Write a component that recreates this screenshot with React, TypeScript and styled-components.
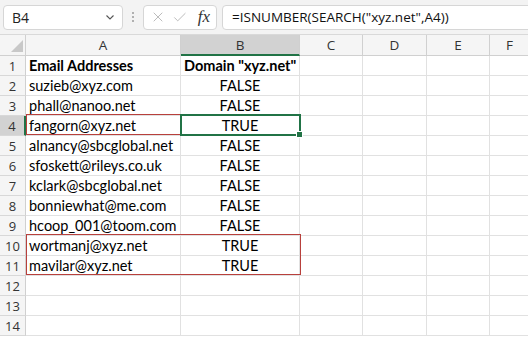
import React from "react";
import styled, { createGlobalStyle } from "styled-components";

const GlobalStyle = createGlobalStyle`
  html, body {
    margin: 0;
    padding: 0;
    background: #ffffff;
  }
  body {
    font-family: "Lato", "Liberation Sans", sans-serif;
  }
`;

const COLS = [26, 155, 119, 63, 64, 63, 40];
const HEADER_H = 21;
const ROW_H = 20;

const rows = [
  { email: "Email Addresses", result: 'Domain "xyz.net"', bold: true },
  { email: "suzieb@xyz.com", result: "FALSE" },
  { email: "phall@nanoo.net", result: "FALSE" },
  { email: "fangorn@xyz.net", result: "TRUE" },
  { email: "alnancy@sbcglobal.net", result: "FALSE" },
  { email: "sfoskett@rileys.co.uk", result: "FALSE" },
  { email: "kclark@sbcglobal.net", result: "FALSE" },
  { email: "bonniewhat@me.com", result: "FALSE" },
  { email: "hcoop_001@toom.com", result: "FALSE" },
  { email: "wortmanj@xyz.net", result: "TRUE" },
  { email: "mavilar@xyz.net", result: "TRUE" },
  { email: "", result: "" },
  { email: "", result: "" },
  { email: "", result: "" },
];

function App() {
  const left = (col: number) => COLS.slice(0, col).reduce((a, b) => a + b, 0);
  const top = (row: number) => HEADER_H + (row - 1) * ROW_H;

  return (
    <>
      <GlobalStyle />
      <Page>
        <Toolbar>
          <NameBox>
            <span>B4</span>
            <svg width="12" height="12" viewBox="0 0 12 12">
              <path d="M2.5 4.5 L6 8 L9.5 4.5" fill="none" stroke="#555" strokeWidth="1.1" />
            </svg>
          </NameBox>
          <Dots>
            <i />
            <i />
            <i />
          </Dots>
          <FxBox>
            <svg width="14" height="14" viewBox="0 0 14 14">
              <path d="M2 2 L12 12 M12 2 L2 12" stroke="#b8b8b8" strokeWidth="1.1" fill="none" />
            </svg>
            <svg width="16" height="14" viewBox="0 0 16 14">
              <path d="M1.5 7.5 L5.5 11.5 L14.5 2.5" stroke="#b8b8b8" strokeWidth="1.1" fill="none" />
            </svg>
            <Fx>fx</Fx>
          </FxBox>
          <FormulaBox>=ISNUMBER(SEARCH("xyz.net",A4))</FormulaBox>
        </Toolbar>

        <Sheet>
          <Grid>
            <Corner>
              <svg width="12" height="12" viewBox="0 0 12 12">
                <path d="M12 0 L12 12 L0 12 Z" fill="#c8c8c8" />
              </svg>
            </Corner>
            {["A", "B", "C", "D", "E", "F"].map((c) => (
              <ColHead key={c} $active={c === "B"}>
                {c}
              </ColHead>
            ))}
            {rows.map((r, i) => {
              const n = i + 1;
              return (
                <React.Fragment key={n}>
                  <RowHead $active={n === 4}>{n}</RowHead>
                  <Cell $bold={r.bold}>{r.email}</Cell>
                  <Cell $bold={r.bold} $center={!r.bold}>
                    {r.result}
                  </Cell>
                  <Cell />
                  <Cell />
                  <Cell />
                  <Cell />
                </React.Fragment>
              );
            })}
          </Grid>

          <RedBox
            style={{
              left: left(1),
              top: top(4) - 1,
              width: COLS[1] + 1,
              height: ROW_H + 1,
            }}
          />
          <RedBox
            style={{
              left: left(1),
              top: top(10) - 1,
              width: COLS[1] + COLS[2] + 1,
              height: ROW_H * 2 + 1,
            }}
          />
          <ActiveCell
            style={{
              left: left(2) - 1,
              top: top(4) - 1,
              width: COLS[2] + 2,
              height: ROW_H + 2,
            }}
          >
            <FillHandle />
          </ActiveCell>
        </Sheet>
      </Page>
    </>
  );
}

const Page = styled.div`
  width: 528px;
  height: 340px;
  overflow: hidden;
  background: #ffffff;
`;

const Toolbar = styled.div`
  display: flex;
  align-items: center;
  height: 34px;
  padding: 0 0 0 3px;
  background: #f3f3f3;
  box-sizing: border-box;
`;

const Box = styled.div`
  height: 25px;
  box-sizing: border-box;
  background: #ffffff;
  border: 1px solid #d6d6d6;
  border-radius: 4px;
  display: flex;
  align-items: center;
`;

const NameBox = styled(Box)`
  width: 120px;
  padding: 0 6px 0 8px;
  justify-content: space-between;
  font-family: "Open Sans", "Liberation Sans", sans-serif;
  font-size: 14px;
  color: #222;
`;

const Dots = styled.div`
  width: 20px;
  display: flex;
  flex-direction: column;
  align-items: center;
  gap: 2px;
  i {
    display: block;
    width: 2px;
    height: 2px;
    border-radius: 1px;
    background: #9a9a9a;
  }
`;

const FxBox = styled(Box)`
  width: 74px;
  padding: 0 6px 0 8px;
  gap: 9px;
`;

const Fx = styled.span`
  font-family: "Liberation Serif", "DejaVu Serif", serif;
  font-style: italic;
  font-size: 17px;
  color: #333;
  margin-left: 2px;
`;

const FormulaBox = styled(Box)`
  flex: 1;
  margin-left: 5px;
  margin-right: -6px;
  padding-left: 9px;
  font-family: "Open Sans", "Liberation Sans", sans-serif;
  font-size: 13.5px;
  color: #111;
  white-space: nowrap;
`;

const Sheet = styled.div`
  position: relative;
`;

const Grid = styled.div`
  display: grid;
  grid-template-columns: ${COLS.map((c) => `${c}px`).join(" ")};
  grid-template-rows: ${HEADER_H}px;
  grid-auto-rows: ${ROW_H}px;
  border-top: 1px solid #d9d9d9;
`;

const Corner = styled.div`
  background: #f5f5f5;
  border-right: 1px solid #d0d0d0;
  border-bottom: 1px solid #d0d0d0;
  display: flex;
  align-items: flex-end;
  justify-content: flex-end;
  padding: 0 2px 3px 0;
  box-sizing: border-box;
`;

const ColHead = styled.div<{ $active?: boolean }>`
  background: ${(p) => (p.$active ? "#d2d2d2" : "#f5f5f5")};
  border-right: 1px solid #d0d0d0;
  border-bottom: ${(p) => (p.$active ? "2px solid #217346" : "1px solid #d0d0d0")};
  box-sizing: border-box;
  display: flex;
  align-items: center;
  justify-content: center;
  font-family: "Open Sans", "Liberation Sans", sans-serif;
  font-size: 13.5px;
  color: #333;
`;

const RowHead = styled.div<{ $active?: boolean }>`
  background: ${(p) => (p.$active ? "#d2d2d2" : "#f5f5f5")};
  border-right: ${(p) => (p.$active ? "2px solid #217346" : "1px solid #d0d0d0")};
  border-bottom: 1px solid #d8d8d8;
  box-sizing: border-box;
  display: flex;
  align-items: center;
  justify-content: center;
  font-family: "Open Sans", "Liberation Sans", sans-serif;
  font-size: 13px;
  color: #333;
`;

const Cell = styled.div<{ $bold?: boolean; $center?: boolean }>`
  border-right: 1px solid #e1e1e1;
  border-bottom: 1px solid #e1e1e1;
  box-sizing: border-box;
  display: flex;
  align-items: center;
  justify-content: ${(p) => (p.$center ? "center" : "flex-start")};
  padding: 0 3px;
  font-family: "Lato", "Liberation Sans", sans-serif;
  font-size: 14.5px;
  font-weight: ${(p) => (p.$bold ? 700 : 400)};
  color: #000;
  white-space: nowrap;
`;

const RedBox = styled.div`
  position: absolute;
  box-sizing: border-box;
  border: 1px solid #b8403c;
  pointer-events: none;
`;

const ActiveCell = styled.div`
  position: absolute;
  box-sizing: border-box;
  border: 2px solid #217346;
`;

const FillHandle = styled.div`
  position: absolute;
  right: -4px;
  bottom: -4px;
  width: 5px;
  height: 5px;
  background: #217346;
  border: 1px solid #fff;
`;

export default App;
